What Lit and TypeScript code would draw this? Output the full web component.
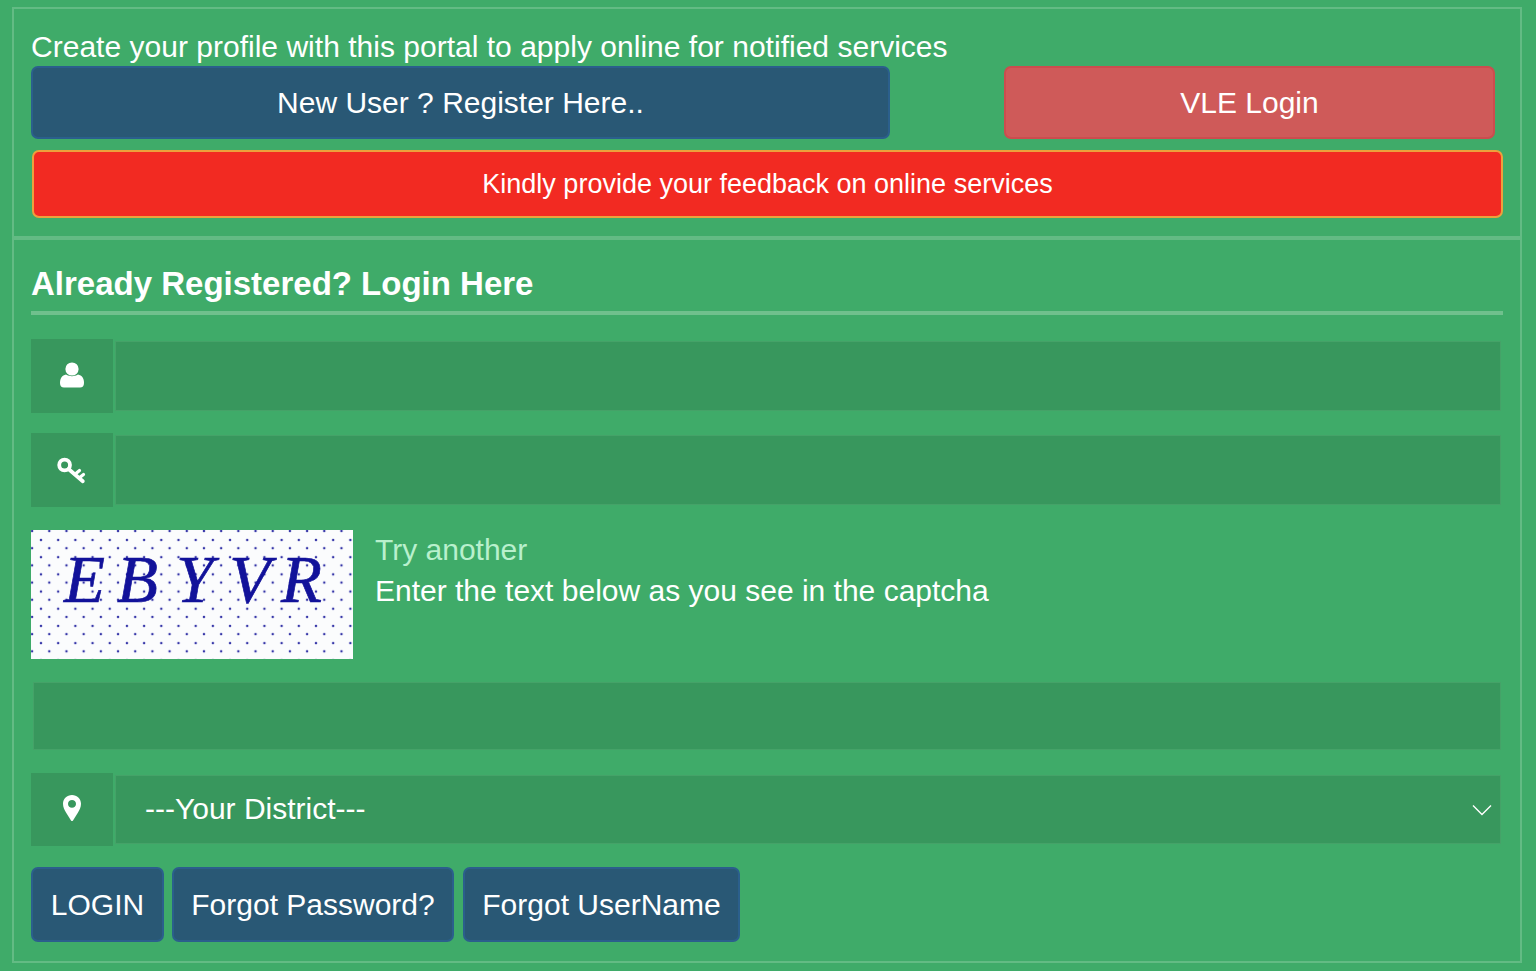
import { LitElement, html, css } from "lit";
import { customElement } from "lit/decorators.js";

@customElement("app-root")
export class AppRoot extends LitElement {
  static styles = css`
    :host {
      display: block;
      height: 971px;
      overflow: hidden;
      background: #3fab69;
      font-family: "Liberation Sans", Arial, sans-serif;
      color: #fff;
      box-sizing: border-box;
      padding: 7px 14px 0 12px;
    }
    * { box-sizing: border-box; }
    .panel {
      height: 956px;
      border: 2px solid #63bb84;
    }
    .top {
      padding: 16px 17px 18px 17px;
      border-bottom: 4px solid #63bb84;
      height: 231px;
    }
    .intro { font-size: 30px; line-height: 43px; height: 41px; white-space: nowrap; letter-spacing: 0.015px; }
    .cta-row { display: flex; justify-content: space-between; padding-right: 8px; }
    .btn {
      display: flex;
      align-items: center;
      justify-content: center;
      border-radius: 7px;
      border: 2px solid #2b5f8c;
      background: #295875;
      color: #fff;
      font: inherit;
      padding: 0;
    }
    .register { width: 859px; height: 73px; font-size: 30px; }
    .vle { width: 491px; height: 73px; font-size: 30px; background: #cf5a59; border-color: #cc4c4e; }
    .feedback {
      margin: 11px 0 0 1px;
      height: 68px;
      width: calc(100% - 1px);
      font-size: 27px;
      background: #f22a22;
      border-color: #eda03c;
    }
    .login { padding: 0 17px; }
    h2 {
      margin: 0;
      padding-top: 16px;
      font-size: 33px;
      font-weight: 700;
      line-height: 55px;
      height: 75px;
      border-bottom: 4px solid #70c08d;
    }
    .field { display: flex; height: 74px; gap: 2px; }
    .first { margin-top: 24px; }
    .second { margin-top: 20px; }
    .addon {
      width: 82px;
      flex: none;
      background: #38975d;
      display: flex;
      align-items: center;
      justify-content: center;
    }
    .addon svg { display: block; fill: #fff; }
    .addon svg.key { fill: none; stroke: #fff; }
    .addon svg.pin { margin-bottom: 4px; }
    .control {
      flex: 1;
      min-width: 0;
      margin: 2px 2px 2px 0;
      border: 0;
      background: #38975d;
      box-shadow: inset 0 0 0 1px #45a268;
      color: #fff;
      font: inherit;
      outline: none;
    }
    .captcha-row { display: flex; margin-top: 23px; height: 129px; gap: 22px; }
    .captcha {
      width: 322px;
      height: 129px;
      flex: none;
      background-color: #fbfcfd;
      background-image:
        radial-gradient(circle, #3636a8 1px, transparent 1.6px),
        radial-gradient(circle, #3636a8 1px, transparent 1.6px);
      background-size: 17.2px 17.2px;
      background-position: -7.5px -7.6px, 1.4px 1.4px;
      color: #12129a;
      font-family: "Liberation Serif", serif;
      font-style: italic;
      font-size: 67px;
      letter-spacing: 15px;
      line-height: 99px;
      padding-left: 33px;
      white-space: nowrap;
      overflow: hidden;
      -webkit-text-stroke: 0.7px #12129a;
    }
    .lb { margin-left: -3px; }
    .ly { margin-left: 3px; }
    .lv { margin-left: 1px; }
    .lr { margin-left: -4px; }
    .captcha-text { font-size: 30px; margin-top: -1px; }
    .captcha-text a { display: block; color: #b9f0cd; line-height: 41px; height: 41px; text-decoration: none; }
    .captcha-text p { margin: 0; line-height: 41px; }
    .code {
      display: block;
      width: calc(100% - 4px);
      height: 68px;
      margin: 23px 2px 0 2px;
    }
    .district { margin-top: 23px; height: 73px; }
    select.control {
      appearance: none;
      -webkit-appearance: none;
      font-size: 30px;
      padding: 0 0 2px 30px;
    }
    .chevron-wrap { position: relative; flex: 1; min-width: 0; display: flex; }
    .chevron-wrap svg {
      position: absolute;
      right: 11px;
      top: 31px;
      pointer-events: none;
    }
    .actions { display: flex; margin-top: 21px; }
    .actions .btn { height: 75px; font-size: 30px; }
    .b1 { width: 133px; margin-right: 8px; }
    .b2 { width: 282px; margin-right: 9px; }
    .b3 { width: 277px; }
  `;

  render() {
    return html`
      <div class="panel">
        <section class="top">
          <div class="intro">Create your profile with this portal to apply online for notified services</div>
          <div class="cta-row">
            <button class="btn register">New User ? Register Here..</button>
            <button class="btn vle">VLE Login</button>
          </div>
          <button class="btn feedback">Kindly provide your feedback on online services</button>
        </section>
        <section class="login">
          <h2>Already Registered? Login Here</h2>
          <div class="field first">
            <span class="addon">
              <svg width="26" height="28" viewBox="0 1 26 28"><circle cx="13" cy="8" r="6.6"/><path d="M1 22c0-5 2-7.500 6-8.500 3.500 2.300 8.500 2.300 12 0 4 1 6 3.500 6 8.500 0 3-1.500 4.500-4 4.500H5c-2.500 0-4-1.500-4-4.500z"/></svg>
            </span>
            <input class="control" type="text" aria-label="User name" />
          </div>
          <div class="field second">
            <span class="addon">
              <svg class="key" width="30" height="30" viewBox="0 0 30 30" stroke-linecap="round"><circle cx="7.600" cy="10" r="5.400" stroke-width="3.800"/><path d="M11.500 14L25.800 26.200" stroke-width="3.800"/><path d="M19.500 18L22.500 15.500M23 22.200L26.500 19.500" stroke-width="3.200"/></svg>
            </span>
            <input class="control" type="password" aria-label="Password" />
          </div>
          <div class="captcha-row">
            <div class="captcha">E<span class="lb">B</span><span class="ly">Y</span><span class="lv">V</span><span class="lr">R</span></div>
            <div class="captcha-text">
              <a href="#">Try another</a>
              <p>Enter the text below as you see in the captcha</p>
            </div>
          </div>
          <input class="control code" type="text" aria-label="Captcha" />
          <div class="field district">
            <span class="addon">
              <svg class="pin" width="20" height="28" viewBox="0 0 20 28"><path fill-rule="evenodd" d="M10 1c5 0 9 3.800 9 8.800 0 3.500-1.500 6-3 8.700L11 26.500c-.5.800-1.500.8-2 0L4 18.500C2.500 15.800 1 13.300 1 9.800 1 4.800 5 1 10 1zm0 5c-2.200 0-4 1.700-4 3.900s1.800 3.900 4 3.900 4-1.700 4-3.900S12.200 6 10 6z"/></svg>
            </span>
            <div class="chevron-wrap">
              <select class="control" aria-label="District">
                <option>---Your District---</option>
              </select>
              <svg width="20" height="12" viewBox="0 0 20 12" fill="none" stroke="#fff" stroke-width="1.400"><path d="M1 1.500l9 9 9-9"/></svg>
            </div>
          </div>
          <div class="actions">
            <button class="btn b1">LOGIN</button>
            <button class="btn b2">Forgot Password?</button>
            <button class="btn b3">Forgot UserName</button>
          </div>
        </section>
      </div>
    `;
  }
}
